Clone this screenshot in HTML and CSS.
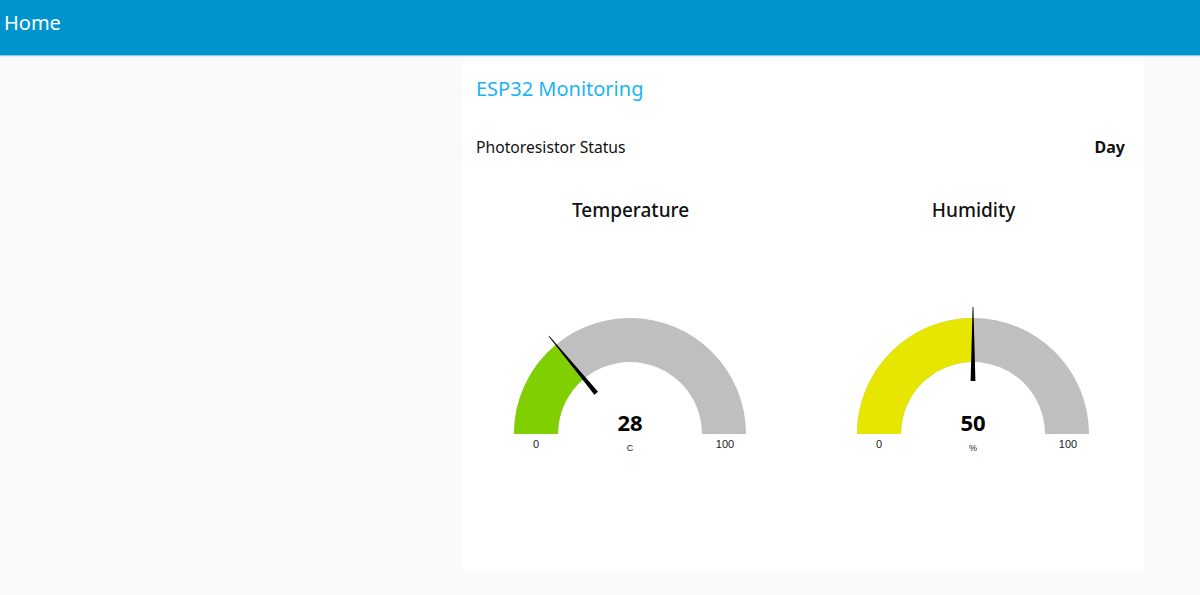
FILE: index.html
```html
<!DOCTYPE html>
<html lang="en">
<head>
	<meta charset="UTF-8">
	<title>Home</title>
	<link rel="stylesheet" href="styles.css">
</head>
<body>
<div class="toolbar">
	<span class="page-title">Home</span>
</div>
<div class="content">
	<div class="group">
		<div class="group-title">ESP32 Monitoring</div>
		<div class="text-row">
			<span class="label">Photoresistor Status</span>
			<span class="value">Day</span>
		</div>
		<div class="gauges">
			<div class="gauge">
				<div class="gauge-title">Temperature</div>
				<svg class="gauge-svg" width="337" height="290" viewBox="0 0 337 290">
					<path d="M 52 204 A 116 116 0 0 1 284 204 L 240 204 A 72 72 0 0 0 96 204 Z" fill="#bfbfbf"/>
					<path d="M 52 204 A 116 116 0 0 1 94.06 114.62 L 122.11 148.52 A 72 72 0 0 0 96 204 Z" fill="#80cf00"/>
					<polygon points="165.6,151 170.4,151 168.4,77 167.6,77" fill="#000" transform="rotate(-39.6 168 204)"/>
					<text class="g-value" x="168" y="201">28</text>
					<text class="g-units" x="168" y="221">C</text>
					<text class="g-limit" x="74" y="218">0</text>
					<text class="g-limit" x="263" y="218">100</text>
				</svg>
			</div>
			<div class="gauge">
				<div class="gauge-title">Humidity</div>
				<svg class="gauge-svg" width="337" height="290" viewBox="0 0 337 290">
					<path d="M 52 204 A 116 116 0 0 1 284 204 L 240 204 A 72 72 0 0 0 96 204 Z" fill="#bfbfbf"/>
					<path d="M 52 204 A 116 116 0 0 1 168 88 L 168 132 A 72 72 0 0 0 96 204 Z" fill="#e6e600"/>
					<polygon points="165.6,151 170.4,151 168.4,77 167.6,77" fill="#000"/>
					<text class="g-value" x="168" y="201">50</text>
					<text class="g-units" x="168" y="221">%</text>
					<text class="g-limit" x="74" y="218">0</text>
					<text class="g-limit" x="263" y="218">100</text>
				</svg>
			</div>
		</div>
	</div>
</div>
</body>
</html>
```

FILE: styles.css
```css
*{margin: 0;padding: 0;box-sizing: border-box;}
body{
	background: #fafafa;
	font-family: "Noto Sans", "Open Sans", sans-serif;
	color: #111;
	width: 1200px;
	height: 595px;
	overflow: hidden;
}
.toolbar{
	height: 55px;
	background: #0094ce;
	box-shadow: 0 1px 1px rgba(0, 148, 206, 0.45);
	display: flex;
	align-items: center;
	padding-left: 4px;
	padding-bottom: 10px;
}
.page-title{
	color: #fff;
	font-size: 20px;
}
.content{
	padding-top: 7px;
	padding-left: 462px;
}
.group{
	width: 682px;
	height: 509px;
	background: #fff;
	display: flex;
	flex-direction: column;
}
.group-title{
	height: 52px;
	line-height: 54px;
	padding-left: 14px;
	color: #1bb4f6;
	font-size: 20px;
}
.text-row{
	height: 66px;
	display: flex;
	align-items: center;
	justify-content: space-between;
	padding: 0 19px 0 14px;
	font-size: 15.7px;
}
.text-row .value{
	font-weight: bold;
	font-size: 16px;
}
.gauges{
	margin-top: 10px;
	display: grid;
	grid-template-columns: 337px 337px;
	column-gap: 6px;
}
.gauge-title{
	height: 40px;
	line-height: 40px;
	text-align: center;
	font-size: 19px;
	font-weight: 500;
}
.gauge-svg{
	display: block;
}
.g-value{
	font-family: "Noto Sans", sans-serif;
	font-size: 22px;
	font-weight: bold;
	text-anchor: middle;
	fill: #010101;
}
.g-units{
	font-family: "Liberation Sans", sans-serif;
	font-size: 9px;
	text-anchor: middle;
	fill: #222;
}
.g-limit{
	font-family: "Liberation Sans", sans-serif;
	font-size: 11px;
	text-anchor: middle;
	fill: #222;
}
```
